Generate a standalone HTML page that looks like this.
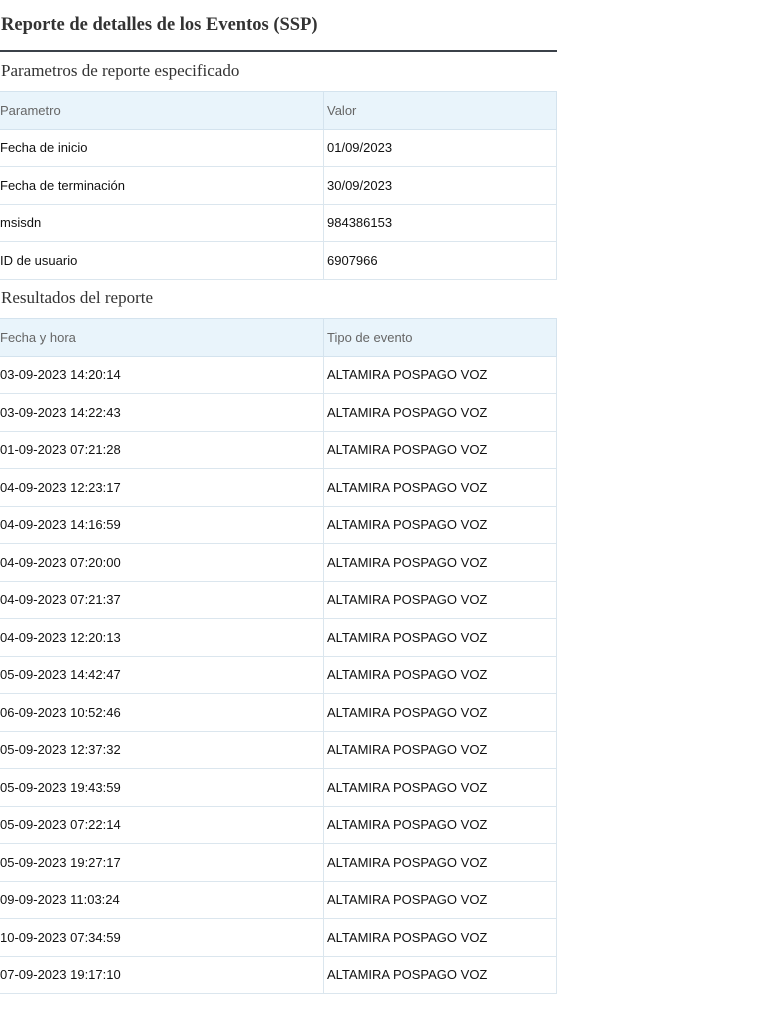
<!DOCTYPE html>
<html><head><meta charset="utf-8"><style>
body{margin:0;background:#fff;width:768px;height:1024px;overflow:hidden;position:relative}
h1{position:absolute;left:1px;top:15px;margin:0;font:bold 18.5px "Liberation Serif",serif;color:#333}
.rule{position:absolute;left:0;top:50px;width:557px;height:2px;background:#3b4149}
h2{position:absolute;left:1px;margin:0;font:normal 17px "Liberation Serif",serif;color:#333}
table{position:absolute;left:0;width:557px;border-collapse:collapse;font:13px "Liberation Sans",sans-serif;color:#111}
td{height:36.5px;padding:0;border:1px solid #dbe6ee;border-left:none;vertical-align:middle}
td:first-child{width:323px}
td+td{padding-left:3px}
tr.h td{background:#e9f4fb;color:#666;border-color:#d4e3ee}
</style></head><body>
<h1>Reporte de detalles de los Eventos (SSP)</h1>
<div class="rule"></div>
<h2 style="top:61px">Parametros de reporte especificado</h2>
<table style="top:91px">
<tr class="h"><td>Parametro</td><td>Valor</td></tr>
<tr><td>Fecha de inicio</td><td>01/09/2023</td></tr>
<tr><td>Fecha de terminación</td><td>30/09/2023</td></tr>
<tr><td>msisdn</td><td>984386153</td></tr>
<tr><td>ID de usuario</td><td>6907966</td></tr>
</table>
<h2 style="top:288px">Resultados del reporte</h2>
<table style="top:318px">
<tr class="h"><td>Fecha y hora</td><td>Tipo de evento</td></tr>
<tr><td>03-09-2023 14:20:14</td><td>ALTAMIRA POSPAGO VOZ</td></tr>
<tr><td>03-09-2023 14:22:43</td><td>ALTAMIRA POSPAGO VOZ</td></tr>
<tr><td>01-09-2023 07:21:28</td><td>ALTAMIRA POSPAGO VOZ</td></tr>
<tr><td>04-09-2023 12:23:17</td><td>ALTAMIRA POSPAGO VOZ</td></tr>
<tr><td>04-09-2023 14:16:59</td><td>ALTAMIRA POSPAGO VOZ</td></tr>
<tr><td>04-09-2023 07:20:00</td><td>ALTAMIRA POSPAGO VOZ</td></tr>
<tr><td>04-09-2023 07:21:37</td><td>ALTAMIRA POSPAGO VOZ</td></tr>
<tr><td>04-09-2023 12:20:13</td><td>ALTAMIRA POSPAGO VOZ</td></tr>
<tr><td>05-09-2023 14:42:47</td><td>ALTAMIRA POSPAGO VOZ</td></tr>
<tr><td>06-09-2023 10:52:46</td><td>ALTAMIRA POSPAGO VOZ</td></tr>
<tr><td>05-09-2023 12:37:32</td><td>ALTAMIRA POSPAGO VOZ</td></tr>
<tr><td>05-09-2023 19:43:59</td><td>ALTAMIRA POSPAGO VOZ</td></tr>
<tr><td>05-09-2023 07:22:14</td><td>ALTAMIRA POSPAGO VOZ</td></tr>
<tr><td>05-09-2023 19:27:17</td><td>ALTAMIRA POSPAGO VOZ</td></tr>
<tr><td>09-09-2023 11:03:24</td><td>ALTAMIRA POSPAGO VOZ</td></tr>
<tr><td>10-09-2023 07:34:59</td><td>ALTAMIRA POSPAGO VOZ</td></tr>
<tr><td>07-09-2023 19:17:10</td><td>ALTAMIRA POSPAGO VOZ</td></tr>
</table>
</body></html>
